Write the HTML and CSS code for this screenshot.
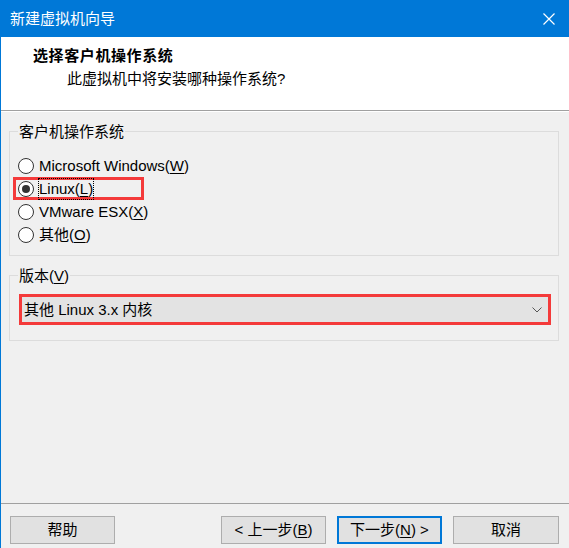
FILE: index.html
```html
<!DOCTYPE html>
<html lang="zh-CN">
<head>
<meta charset="utf-8">
<title>新建虚拟机向导</title>
<link rel="stylesheet" href="styles.css">
</head>
<body>
<div class="window">
  <div class="titlebar">
    <span class="title">新建虚拟机向导</span>
    <span class="close" aria-label="关闭">
      <svg width="12" height="12" viewBox="0 0 12 12"><path d="M0.5 0.5 L11.5 11.5 M11.5 0.5 L0.5 11.5" stroke="#fff" stroke-width="1.2" fill="none"/></svg>
    </span>
  </div>
  <div class="header">
    <div class="h-title">选择客户机操作系统</div>
    <div class="h-sub">此虚拟机中将安装哪种操作系统?</div>
  </div>
  <div class="content">
    <div class="group os-group">
      <span class="group-title">客户机操作系统</span>
      <div class="radio"><span class="rb"></span><span class="rl">Microsoft Windows(<u>W</u>)</span></div>
      <div class="radio marked"><span class="rb checked"></span><span class="rl focus">Linux(<u>L</u>)</span></div>
      <div class="radio"><span class="rb"></span><span class="rl">VMware ESX(<u>X</u>)</span></div>
      <div class="radio"><span class="rb"></span><span class="rl">其他(<u>O</u>)</span></div>
    </div>
    <div class="group ver-group">
      <span class="group-title">版本(<u>V</u>)</span>
      <div class="combo">
        <span class="combo-text">其他 Linux 3.x 内核</span>
        <svg class="chev" width="10" height="6" viewBox="0 0 10 6"><path d="M0.5 0.5 L5 5 L9.5 0.5" stroke="#555" stroke-width="1" fill="none"/></svg>
      </div>
    </div>
  </div>
  <div class="footer">
    <button class="btn help">帮助</button>
    <div class="spacer"></div>
    <button class="btn">&lt; 上一步(<u>B</u>)</button>
    <button class="btn primary">下一步(<u>N</u>) &gt;</button>
    <button class="btn cancel">取消</button>
  </div>
</div>
</body>
</html>
```
FILE: styles.css
```css
* { box-sizing: border-box; }
html, body { margin: 0; padding: 0; }
body {
  width: 569px;
  height: 548px;
  overflow: hidden;
  font-family: "Liberation Sans", "Noto Sans CJK SC", sans-serif;
  font-size: 15px;
  color: #000;
  background: #f0f0f0;
}
.window {
  width: 569px;
  height: 548px;
  border-left: 1px solid #0078d7;
  display: flex;
  flex-direction: column;
  background: #f0f0f0;
}
.titlebar {
  height: 37px;
  flex: none;
  background: #0078d7;
  color: #fff;
  display: flex;
  align-items: center;
  padding-left: 9px;
  padding-right: 14px;
}
.title { flex: 1; line-height: 20px; }
.close { display: flex; width: 12px; height: 12px; }
.header {
  height: 74px;
  flex: none;
  background: #fff;
  border-bottom: 1px solid #a0a0a0;
  padding-top: 9px;
  line-height: 20px;
}
.h-title { font-weight: bold; padding-left: 32px; letter-spacing: 0.6px; }
.h-sub { padding-left: 66px; margin-top: 3px; }
.content {
  flex: 1;
  padding: 19px 10px 0 8px;
  border-top: 1px solid #fff;
}
.group {
  position: relative;
  border: 1px solid #dcdcdc;
}
.group-title {
  position: absolute;
  top: -10px;
  left: 8px;
  padding: 0 1px;
  line-height: 20px;
  background: #f0f0f0;
}
.os-group { padding: 22px 0 9px 3px; height: 125px; }
.radio {
  height: 23px;
  display: flex;
  align-items: center;
  padding-left: 5px;
  width: max-content;
}
.radio.marked { width: 131px; box-shadow: inset 0 0 0 3px #f43a3a; }
.rb {
  width: 16px;
  height: 16px;
  border: 1px solid #333;
  border-radius: 50%;
  background: #fff;
  display: flex;
  align-items: center;
  justify-content: center;
  margin-right: 5px;
}
.rb.checked::after {
  content: "";
  width: 8px;
  height: 8px;
  border-radius: 50%;
  background: #333;
}
.rl { line-height: 20px; }
.rl.focus { outline: 1px dotted #000; outline-offset: 0; }
.ver-group { margin-top: 19px; padding: 18px 7px 16px 9px; height: 66px; }
.combo {
  height: 31px;
  border: 3px solid #f43a3a;
  background: #e3e3e3;
  display: flex;
  align-items: center;
  padding: 0 6px 0 2px;
}
.combo-text { flex: 1; line-height: 20px; }
.chev { margin-top: 1px; }
.footer {
  flex: none;
  height: 45px;
  border-top: 1px solid #a0a0a0;
  display: flex;
  align-items: flex-start;
  padding: 12px 10px 0 9px;
  gap: 11px;
}
.spacer { flex: 1; }
.btn {
  width: 105px;
  height: 28px;
  margin: 0;
  padding: 0;
  font: inherit;
  line-height: 20px;
  color: #000;
  background: #e1e1e1;
  border: 1px solid #adadad;
  border-radius: 0;
}
.btn.cancel { width: 106px; }
.btn.primary { border: 2px solid #0078d7; }
u { text-underline-offset: 2px; }
```
